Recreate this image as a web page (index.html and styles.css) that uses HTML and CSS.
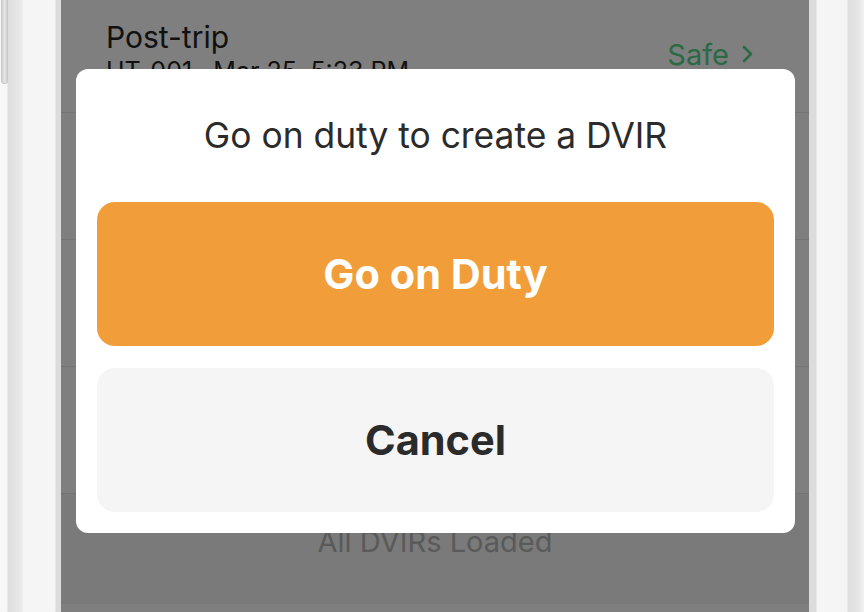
FILE: index.html
```html
<!DOCTYPE html>
<html lang="en">
<head>
  <meta charset="UTF-8">
  <title>DVIRs</title>
  <link rel="stylesheet" href="styles.css">
</head>
<body>
  <div class="device">
    <div class="bezel bezel-left">
      <span class="side-button"></span>
    </div>

    <div class="screen">
      <ul class="dvir-list">
        <li class="dvir-row">
          <div class="dvir-info">
            <div class="dvir-type">Post-trip</div>
            <div class="dvir-meta">HT-001 · Mar 25, 5:23 PM</div>
          </div>
          <div class="dvir-status">
            Safe
            <svg class="chevron" width="14" height="20" viewBox="0 0 14 20">
              <path d="M3 3 L10 10 L3 17" fill="none" stroke="currentColor" stroke-width="2.6" stroke-linecap="round" stroke-linejoin="round"/>
            </svg>
          </div>
        </li>
        <li class="dvir-row"></li>
        <li class="dvir-row"></li>
        <li class="dvir-row"></li>
      </ul>
      <div class="list-footer">All DVIRs Loaded</div>
      <div class="tab-bar"></div>

      <div class="overlay">
        <div class="modal">
          <h2 class="modal-title">Go on duty to create a DVIR</h2>
          <button class="btn btn-primary">Go on Duty</button>
          <button class="btn btn-secondary">Cancel</button>
        </div>
      </div>
    </div>

    <div class="bezel bezel-right"></div>
  </div>
</body>
</html>
```

FILE: styles.css
```css
* {
  box-sizing: border-box;
}

body {
  margin: 0;
  width: 864px;
  height: 612px;
  overflow: hidden;
  font-family: Inter, "Noto Sans", sans-serif;
  background: #f5f5f5;
}

.device {
  display: flex;
  height: 612px;
}

/* frame around the screen */
.bezel {
  position: relative;
  flex: none;
  height: 100%;
}

.bezel-left {
  width: 61px;
  background: linear-gradient(to right, #f7f7f7 0, #f7f7f7 7px, #dedede 8px, #e9e9e9 22px, #f5f5f5 23px, #f5f5f5 55px, #dcdcdc 56px);
}

.side-button {
  position: absolute;
  left: 1px;
  top: 0;
  width: 7px;
  height: 84px;
  border-radius: 0 0 4px 4px;
  background: linear-gradient(to right, #cfcfcf, #e4e4e4 50%, #d2d2d2);
  border: 1px solid #c8c8c8;
  border-top: none;
}

.bezel-right {
  width: 55px;
  background: linear-gradient(to right, #dcdcdc 0, #dcdcdc 7px, #f5f5f5 8px, #f5f5f5 38px, #dedede 39px, #e6e6e6 50px, #f2f2f2 55px);
}

.screen {
  position: relative;
  flex: 1;
  height: 100%;
  overflow: hidden;
  background: #fff;
}

.dvir-list {
  list-style: none;
  margin: -14px 0 0;
  padding: 0;
}

.dvir-row {
  display: flex;
  align-items: center;
  justify-content: space-between;
  height: 127px;
  padding: 10px 54px 0 45px;
  border-bottom: 1px solid #e9e9e9;
}

.dvir-type {
  font-size: 30px;
  line-height: 34px;
  color: #222;
}

.dvir-meta {
  font-size: 25px;
  line-height: 34px;
  color: #222;
}

.dvir-status {
  display: flex;
  align-items: center;
  gap: 12px;
  font-size: 29px;
  color: #58d28a;
}

.list-footer {
  height: 110px;
  padding-top: 30px;
  background: #f4f4f4;
  text-align: center;
  font-size: 29px;
  color: #b4b4b4;
}

.tab-bar {
  height: 40px;
  background: #fff;
}

/* dimmed backdrop with the dialog */
.overlay {
  position: absolute;
  inset: 0;
  padding: 69px 14px 0 15px;
  background: rgba(0, 0, 0, 0.5);
}

.modal {
  display: flex;
  flex-direction: column;
  gap: 22px;
  padding: 21px;
  border-radius: 12px;
  background: #fff;
}

.modal-title {
  margin: 0 0 -2px;
  padding: 24px 0;
  font-size: 35.4px;
  line-height: 44px;
  font-weight: 400;
  text-align: center;
  color: #2b2b2b;
}

.btn {
  height: 144px;
  border: none;
  border-radius: 18px;
  font-family: inherit;
  font-size: 41.5px;
  font-weight: 700;
}

.btn-primary {
  background: #f09d3a;
  color: #fff;
}

.btn-secondary {
  background: #f5f5f5;
  color: #2b2b2b;
}
```
